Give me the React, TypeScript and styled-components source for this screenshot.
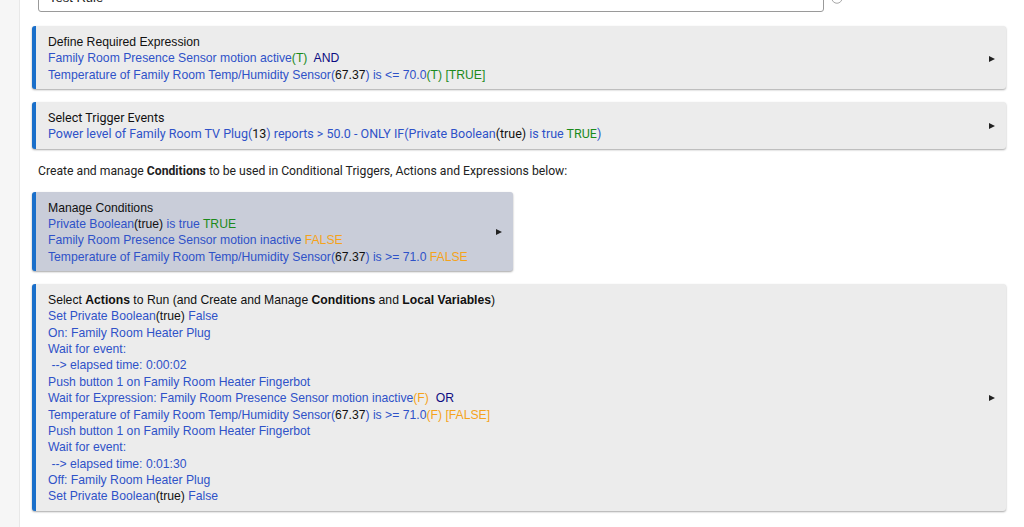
import styled, { createGlobalStyle } from 'styled-components';
import { RotateCw } from 'lucide-react';

const GlobalStyle = createGlobalStyle`
  html, body {
    margin: 0;
    padding: 0;
    background: #ffffff;
    overflow: hidden;
  }
  body {
    font-family: 'Liberation Sans', Arial, sans-serif;
  }
`;

type Tone = 'blue' | 'black' | 'green' | 'orange' | 'navy';

const toneColors: Record<Tone, string> = {
  blue: '#2f52c8',
  black: '#111111',
  green: '#1b8a1b',
  orange: '#f5a31a',
  navy: '#0c0c82',
};

type Part = [Tone, string];

interface CardData {
  title: React.ReactNode;
  lines: Part[][];
  highlight?: boolean;
  narrow?: boolean;
  roboto?: boolean;
}

const cards: CardData[] = [
  {
    title: 'Define Required Expression',
    lines: [
      [
        ['blue', 'Family Room Presence Sensor motion active'],
        ['green', '(T)'],
        ['navy', '\u00a0 AND'],
      ],
      [
        ['blue', 'Temperature of Family Room Temp/Humidity Sensor('],
        ['black', '67.37'],
        ['blue', ') is <= 70.0'],
        ['green', '(T) [TRUE]'],
      ],
    ],
  },
  {
    title: 'Select Trigger Events',
    roboto: true,
    lines: [
      [
        ['blue', 'Power level of Family Room TV Plug('],
        ['black', '13'],
        ['blue', ') reports > 50.0 - ONLY IF(Private Boolean'],
        ['black', '(true)'],
        ['blue', ' is true '],
        ['green', 'TRUE'],
        ['blue', ')'],
      ],
    ],
  },
];

const conditionsCard: CardData = {
  title: 'Manage Conditions',
  highlight: true,
  narrow: true,
  lines: [
    [
      ['blue', 'Private Boolean'],
      ['black', '(true)'],
      ['blue', ' is true '],
      ['green', 'TRUE'],
    ],
    [
      ['blue', 'Family Room Presence Sensor motion inactive '],
      ['orange', 'FALSE'],
    ],
    [
      ['blue', 'Temperature of Family Room Temp/Humidity Sensor('],
      ['black', '67.37'],
      ['blue', ') is >= 71.0 '],
      ['orange', 'FALSE'],
    ],
  ],
};

const actionsCard: CardData = {
  title: (
    <>
      Select <b>Actions</b> to Run (and Create and Manage <b>Conditions</b> and <b>Local Variables</b>)
    </>
  ),
  lines: [
    [
      ['blue', 'Set Private Boolean'],
      ['black', '(true)'],
      ['blue', ' False'],
    ],
    [['blue', 'On: Family Room Heater Plug']],
    [['blue', 'Wait for event:']],
    [['blue', '\u00a0--> elapsed time: 0:00:02']],
    [['blue', 'Push button 1 on Family Room Heater Fingerbot']],
    [
      ['blue', 'Wait for Expression: Family Room Presence Sensor motion inactive'],
      ['orange', '(F)'],
      ['navy', '\u00a0 OR'],
    ],
    [
      ['blue', 'Temperature of Family Room Temp/Humidity Sensor('],
      ['black', '67.37'],
      ['blue', ') is >= 71.0'],
      ['orange', '(F) [FALSE]'],
    ],
    [['blue', 'Push button 1 on Family Room Heater Fingerbot']],
    [['blue', 'Wait for event:']],
    [['blue', '\u00a0--> elapsed time: 0:01:30']],
    [['blue', 'Off: Family Room Heater Plug']],
    [
      ['blue', 'Set Private Boolean'],
      ['black', '(true)'],
      ['blue', ' False'],
    ],
  ],
};

const RuleCard = ({ card }: { card: CardData }) => (
  <Card $highlight={card.highlight} $narrow={card.narrow} $roboto={card.roboto}>
    <CardBody>
      <CardTitle>{card.title}</CardTitle>
      {card.lines.map((line, i) => (
        <CardLine key={i}>
          {line.map(([tone, text], j) => (
            <Span key={j} $tone={tone}>
              {text}
            </Span>
          ))}
        </CardLine>
      ))}
    </CardBody>
    <Arrow />
  </Card>
);

export default function App() {
  return (
    <>
      <GlobalStyle />
      <Page>
        <Sidebar />
        <Main>
          <NameRow>
            <NameInput defaultValue="Test Rule" />
            <RefreshIcon>
              <RotateCw size={14} strokeWidth={1.5} />
            </RefreshIcon>
          </NameRow>
          <RuleCard card={cards[0]} />
          <RuleCard card={cards[1]} />
          <Note>
            Create and manage <b>Conditions</b> to be used in Conditional Triggers, Actions and Expressions below:
          </Note>
          <RuleCard card={conditionsCard} />
          <RuleCard card={actionsCard} />
        </Main>
      </Page>
    </>
  );
}

const Page = styled.div`
  display: flex;
  height: 527px;
  overflow: hidden;
`;

const Sidebar = styled.div`
  width: 19px;
  flex: none;
  background: #f6f6f6;
  border-right: 1px solid #e8e8e8;
`;

const Main = styled.div`
  flex: 1;
  display: flex;
  flex-direction: column;
  padding: 0 18px 0 12px;
`;

const NameRow = styled.div`
  display: flex;
  align-items: flex-end;
  gap: 6px;
  margin: -18px 0 1px 6px;
`;

const NameInput = styled.input`
  width: 786px;
  height: 30px;
  box-sizing: border-box;
  border: 1px solid #9a9a9a;
  border-radius: 3px;
  padding: 0 10px;
  font-family: 'Liberation Sans', Arial, sans-serif;
  font-size: 13px;
  color: #222;
  background: #fff;
`;

const RefreshIcon = styled.div`
  color: #9a9a9a;
  display: flex;
  margin-bottom: 7px;
`;

const Card = styled.div<{ $highlight?: boolean; $narrow?: boolean; $roboto?: boolean }>`
  display: flex;
  align-items: center;
  margin-top: 13px;
  width: ${(p) => (p.$narrow ? '481px' : 'auto')};
  box-sizing: border-box;
  background: ${(p) => (p.$highlight ? '#c9cdd9' : '#ececec')};
  border-left: 4px solid #1a6fca;
  border-radius: 3px;
  box-shadow: 0 1px 2px rgba(0, 0, 0, 0.35);
  padding: 8px 11px 6px 12px;
  font-family: ${(p) =>
    p.$roboto ? "Roboto, 'Liberation Sans', sans-serif" : "'Liberation Sans', Arial, sans-serif"};
  font-size: ${(p) => (p.$roboto ? '12.5px' : '12.2px')};
  line-height: 16.35px;
`;

const CardBody = styled.div`
  flex: 1;
`;

const CardTitle = styled.div`
  color: #111;
`;

const CardLine = styled.div`
  white-space: pre;
`;

const Span = styled.span<{ $tone: Tone }>`
  color: ${(p) => toneColors[p.$tone]};
`;

const Arrow = styled.div`
  width: 0;
  height: 0;
  border-top: 3.5px solid transparent;
  border-bottom: 3.5px solid transparent;
  border-left: 6px solid #222;
`;

const Note = styled.div`
  font-family: Roboto, 'Liberation Sans', sans-serif;
  font-size: 12.2px;
  color: #222;
  margin: 14px 0 0 6px;
  line-height: 16px;
`;
